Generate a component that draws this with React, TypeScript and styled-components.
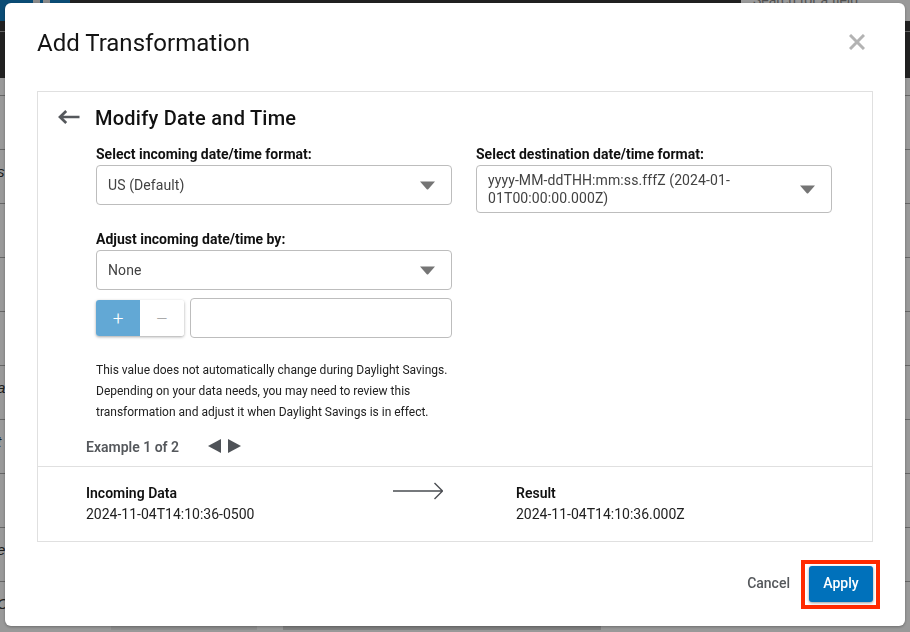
import React from "react";
import styled, { createGlobalStyle } from "styled-components";

const GlobalStyle = createGlobalStyle`
  html, body {
    margin: 0;
    padding: 0;
    height: 100%;
    overflow: hidden;
    background: #fff;
    font-family: Roboto, "Liberation Sans", sans-serif;
  }
  * { box-sizing: border-box; }
`;

// what is left of the page behind the modal
const rowLetters = ["", "s", "", "", "", "a", "t", "", "e", "C"];

export default function App(): React.ReactElement {
  return (
    <Page>
      <GlobalStyle />
      <TopBar>
        <Brand>
          <BrandMark />
          <BrandMark />
        </Brand>
        <TopSpacer />
        <SearchBox>Search for a field</SearchBox>
      </TopBar>
      <SubBar />
      <FirstRow />
      {rowLetters.map((letter, index) => (
        <BackRow key={index}>
          <RowLetter>{letter}</RowLetter>
          {index === rowLetters.length - 1 && (
            <FooterCells>
              <FooterCell $width={146} $color="#ececec" />
              <FooterCell $width={318} $color="#d6d6d6" />
            </FooterCells>
          )}
        </BackRow>
      ))}
      <Backdrop>
        <Modal>
          <ModalHeader>
            <ModalTitle>Add Transformation</ModalTitle>
            <CloseButton aria-label="Close">
              <svg width="16" height="16" viewBox="0 0 16 16">
                <path d="M1 1L15 15M15 1L1 15" stroke="#b3b3b3" strokeWidth="3" fill="none" />
              </svg>
            </CloseButton>
          </ModalHeader>
          <Card>
            <HeadingRow>
              <BackButton aria-label="Back">
                <svg width="22" height="14" viewBox="0 0 22 14">
                  <path
                    d="M21.5 7H2.5M8.2 1L2 7L8.2 13"
                    stroke="#55585c"
                    strokeWidth="2.7"
                    fill="none"
                  />
                </svg>
              </BackButton>
              <Heading>Modify Date and Time</Heading>
            </HeadingRow>
            <FormGrid>
              <Field>
                <Label>Select incoming date/time format:</Label>
                <SelectBox>
                  <SelectText>US (Default)</SelectText>
                  <Caret />
                </SelectBox>
              </Field>
              <Field>
                <Label>Select destination date/time format:</Label>
                <SelectBox $tall>
                  <SelectText>yyyy-MM-ddTHH:mm:ss.fffZ (2024-01-01T00:00:00.000Z)</SelectText>
                  <Caret />
                </SelectBox>
              </Field>
              <Field>
                <Label>Adjust incoming date/time by:</Label>
                <SelectBox>
                  <SelectText>None</SelectText>
                  <Caret />
                </SelectBox>
                <OffsetRow>
                  <SignToggle>
                    <SignButton $active>+</SignButton>
                    <SignButton>–</SignButton>
                  </SignToggle>
                  <OffsetInput />
                </OffsetRow>
              </Field>
            </FormGrid>
            <HelpText>
              This value does not automatically change during Daylight Savings.
              <br />
              Depending on your data needs, you may need to review this
              <br />
              transformation and adjust it when Daylight Savings is in effect.
            </HelpText>
            <ExampleRow>
              <ExampleLabel>Example 1 of 2</ExampleLabel>
              <ExampleArrows>
                <svg width="13" height="14" viewBox="0 0 13 14">
                  <path d="M13 0V14L0 7Z" fill="#4f5358" />
                </svg>
                <svg width="13" height="14" viewBox="0 0 13 14">
                  <path d="M0 0V14L13 7Z" fill="#4f5358" />
                </svg>
              </ExampleArrows>
            </ExampleRow>
            <DataRow>
              <DataColumn $width={307}>
                <DataLabel>Incoming Data</DataLabel>
                <DataValue>2024-11-04T14:10:36-0500</DataValue>
              </DataColumn>
              <ArrowColumn>
                <svg width="50" height="18" viewBox="0 0 50 18">
                  <path d="M0 9H49M41.5 1L49.5 9L41.5 17" stroke="#4a4d52" strokeWidth="1.4" fill="none" />
                </svg>
              </ArrowColumn>
              <DataColumn>
                <DataLabel>Result</DataLabel>
                <DataValue>2024-11-04T14:10:36.000Z</DataValue>
              </DataColumn>
            </DataRow>
          </Card>
          <ModalFooter>
            <CancelButton>Cancel</CancelButton>
            <Highlight>
              <ApplyButton>Apply</ApplyButton>
            </Highlight>
          </ModalFooter>
        </Modal>
      </Backdrop>
    </Page>
  );
}

const Caret = () => (
  <CaretIcon width="17" height="9" viewBox="0 0 17 9">
    <path d="M1 0.5H16L9.2 8.2Q8.5 8.9 7.8 8.2Z" fill="#757575" />
  </CaretIcon>
);

const Page = styled.div`
  width: 910px;
  height: 632px;
  overflow: hidden;
  background: #fff;
`;

const TopBar = styled.div`
  display: flex;
  height: 21px;
`;

const Brand = styled.div`
  width: 70px;
  background: #117fc4;
  display: flex;
  gap: 3px;
  padding-left: 33px;
`;

const BrandMark = styled.div`
  width: 7px;
  height: 3px;
  background: #e4e4e4;
`;

const TopSpacer = styled.div`
  flex: 1;
  background: #383838;
`;

const SearchBox = styled.div`
  width: 169px;
  height: 21px;
  padding-left: 12px;
  overflow: hidden;
  background: #fff;
  color: #888;
  font-size: 14px;
  line-height: 0;
`;

const SubBar = styled.div`
  height: 57px;
  background-image: linear-gradient(#383838 10px, #aaa 10px, #aaa 11px, #383838 11px);
`;

const FirstRow = styled.div`
  height: 18px;
  border-bottom: 1px solid #aaa;
`;

const BackRow = styled.div`
  height: 54px;
  border-bottom: 1px solid #aaa;
  display: flex;
  flex-direction: column;
  overflow: hidden;
`;

const RowLetter = styled.span`
  height: 16px;
  margin-top: 14px;
  margin-left: -3px;
  font-family: "Liberation Sans", sans-serif;
  font-style: italic;
  font-size: 15px;
  line-height: 16px;
  color: #333;
`;

const FooterCells = styled.div`
  display: flex;
  gap: 26px;
  margin-top: 14px;
  padding-left: 111px;
`;

const FooterCell = styled.div<{ $width: number; $color: string }>`
  width: ${(props) => props.$width}px;
  height: 4px;
  background: ${(props) => props.$color};
`;

const Backdrop = styled.div`
  position: fixed;
  inset: 0;
  background: rgba(0, 0, 0, 0.4);
`;

const Modal = styled.div`
  position: absolute;
  top: 3px;
  left: 5px;
  width: 900px;
  height: 623px;
  padding: 0 32px;
  background: #fff;
  border-radius: 6px;
  box-shadow: 0 1px 3px rgba(0, 0, 0, 0.3);
  display: flex;
  flex-direction: column;
`;

const ModalHeader = styled.div`
  height: 88px;
  display: flex;
  justify-content: space-between;
  align-items: flex-start;
  padding-top: 22px;
`;

const ModalTitle = styled.h1`
  margin: 0;
  font-size: 24px;
  line-height: 36px;
  font-weight: 400;
  color: #141414;
`;

const CloseButton = styled.button`
  border: 0;
  padding: 0;
  margin: 9px 8px 0 0;
  background: none;
  display: flex;
`;

const Card = styled.div`
  border: 1px solid #e0e0e0;
  height: 451px;
  display: flex;
  flex-direction: column;
`;

const HeadingRow = styled.div`
  height: 52px;
  display: flex;
  align-items: center;
  gap: 15px;
  padding-left: 20px;
`;

const BackButton = styled.button`
  border: 0;
  padding: 0;
  background: none;
  display: flex;
  margin-top: -3px;
`;

const Heading = styled.h2`
  margin: 0;
  font-size: 20px;
  line-height: 28px;
  font-weight: 500;
  letter-spacing: 0.25px;
  color: #111;
`;

const FormGrid = styled.div`
  display: grid;
  grid-template-columns: 356px 356px;
  column-gap: 24px;
  row-gap: 16px;
  margin-left: 58px;
`;

const Field = styled.div`
  display: flex;
  flex-direction: column;
`;

const Label = styled.label`
  font-size: 14px;
  line-height: 20px;
  font-weight: 700;
  margin-bottom: 1px;
  color: #111;
`;

const SelectBox = styled.div<{ $tall?: boolean }>`
  height: ${(props) => (props.$tall ? 48 : 40)}px;
  border: 1px solid #bdbdbd;
  border-radius: 4px;
  display: flex;
  align-items: center;
  justify-content: space-between;
  padding: 0 15px 0 11px;
  background: #fff;
`;

const SelectText = styled.span`
  width: 290px;
  font-size: 14px;
  line-height: 18px;
  letter-spacing: 0.1px;
  color: #424242;
`;

const CaretIcon = styled.svg`
  flex: none;
`;

const OffsetRow = styled.div`
  display: flex;
  align-items: center;
  gap: 6px;
  margin-top: 8px;
`;

const SignToggle = styled.div`
  display: flex;
  width: 88px;
  height: 36px;
  border-radius: 3px;
  overflow: hidden;
  box-shadow: 0 1px 3px rgba(0, 0, 0, 0.35);
`;

const SignButton = styled.button<{ $active?: boolean }>`
  flex: 1;
  border: 0;
  padding: 0;
  font-family: inherit;
  font-size: 19px;
  font-weight: 300;
  background: ${(props) => (props.$active ? "#62a8d5" : "#fff")};
  color: ${(props) => (props.$active ? "#fff" : "#aaa")};
`;

const OffsetInput = styled.input`
  flex: 1;
  min-width: 0;
  height: 40px;
  border: 1px solid #bdbdbd;
  border-radius: 4px;
  background: #fff;
`;

const HelpText = styled.p`
  margin: 22px 0 0 58px;
  font-size: 12px;
  line-height: 21px;
  color: #212121;
`;

const ExampleRow = styled.div`
  display: flex;
  align-items: center;
  height: 20px;
  margin: 14px 0 9px 48px;
`;

const ExampleLabel = styled.span`
  width: 122px;
  font-size: 14px;
  font-weight: 600;
  color: #55585c;
`;

const ExampleArrows = styled.div`
  display: flex;
  gap: 7px;
  margin-top: -2px;
`;

const DataRow = styled.div`
  flex: 1;
  display: flex;
  border-top: 1px solid #e0e0e0;
  padding: 16px 0 0 48px;
`;

const DataColumn = styled.div<{ $width?: number }>`
  width: ${(props) => (props.$width ? `${props.$width}px` : "auto")};
`;

const ArrowColumn = styled.div`
  width: 123px;
  display: flex;
  align-items: flex-start;
  margin-top: -1px;
`;

const DataLabel = styled.div`
  font-size: 14px;
  line-height: 21px;
  font-weight: 600;
  color: #111;
`;

const DataValue = styled.div`
  font-size: 14px;
  line-height: 21px;
  color: #212121;
`;

const ModalFooter = styled.div`
  display: flex;
  justify-content: flex-end;
  align-items: center;
  gap: 11px;
  margin: 18px -7px 0 0;
`;

const CancelButton = styled.button`
  border: 0;
  padding: 0;
  margin-top: -3px;
  background: none;
  font-family: inherit;
  font-size: 14px;
  font-weight: 500;
  color: #55585c;
`;

const Highlight = styled.div`
  border: 4px solid #ff2a00;
  padding: 2px 3px 3px 4px;
`;

const ApplyButton = styled.button`
  display: block;
  width: 64px;
  height: 36px;
  padding: 0 0 2px;
  border: 0;
  border-radius: 3px;
  background: #0071bb;
  color: #fff;
  font-family: inherit;
  font-size: 14px;
  font-weight: 500;
  box-shadow: 0 1px 3px rgba(0, 0, 0, 0.4);
`;
